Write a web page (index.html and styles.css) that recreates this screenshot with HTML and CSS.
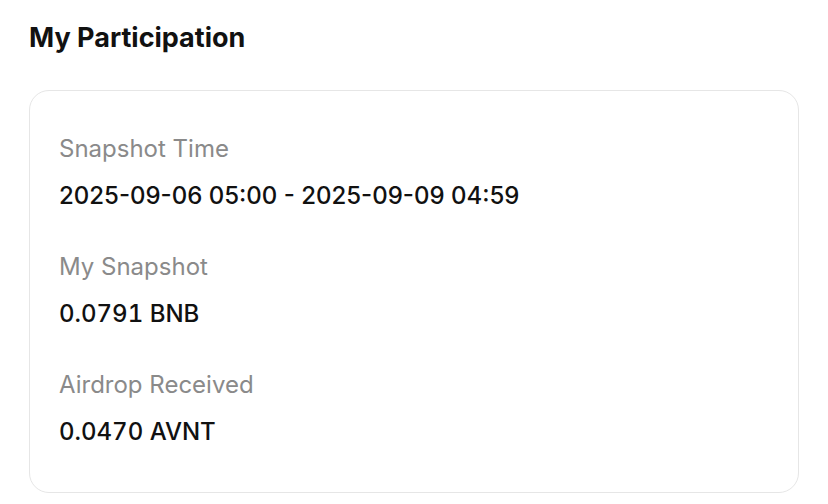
FILE: index.html
```html
<!DOCTYPE html>
<html>
<head>
<meta charset="utf-8">
<link rel="stylesheet" href="styles.css">
</head>
<body>
<div class="page">
  <h2 class="title">My Participation</h2>
  <div class="card">
    <div class="field">
      <div class="label">Snapshot Time</div>
      <div class="value">2025-09-06 05:00 - 2025-09-09 04:59</div>
    </div>
    <div class="field">
      <div class="label">My Snapshot</div>
      <div class="value amount">0.0791 BNB</div>
    </div>
    <div class="field">
      <div class="label">Airdrop Received</div>
      <div class="value amount">0.0470 AVNT</div>
    </div>
  </div>
</div>
</body>
</html>
```
FILE: styles.css
```css
* { box-sizing: border-box; }
html, body { margin: 0; padding: 0; background: #fff; }
body { font-family: Inter, "Noto Sans", sans-serif; color: #111; }
.page { padding: 20px 29px 0 29px; }
.title {
  margin: 0;
  font-size: 27px;
  line-height: 36px;
  font-weight: 700;
  color: #111;
}
.card {
  margin-top: 34px;
  width: 770px;
  height: 403px;
  border: 1px solid #e6e6e6;
  border-radius: 20px;
  padding: 42px 29px 0 29px;
  display: flex;
  flex-direction: column;
  gap: 39px;
}
.field { display: flex; flex-direction: column; gap: 15px; }
.label {
  font-size: 24px;
  line-height: 32px;
  color: #8a8a8a;
}
.value {
  font-size: 24px;
  line-height: 32px;
  font-weight: 500;
  color: #111;
}
.amount { font-variant-numeric: tabular-nums; }
```
